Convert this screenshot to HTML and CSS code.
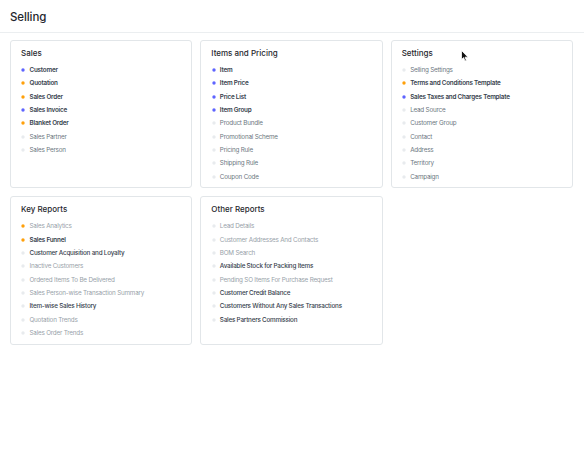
FILE: index.html
```html
<!DOCTYPE html>
<html>
<head>
<meta charset="utf-8">
<link rel="stylesheet" href="styles.css">
</head>
<body>
<header class="page-head"><h1 class="page-title">Selling</h1></header>
<main class="cards">
  <section class="card">
    <h2 class="card-title">Sales</h2>
    <ul class="links">
      <li class="link strong"><svg class="dot blue" viewBox="0 0 4 4"><circle cx="2" cy="2" r="1.7"/></svg>Customer</li>
      <li class="link strong"><svg class="dot orange" viewBox="0 0 4 4"><circle cx="2" cy="2" r="1.7"/></svg>Quotation</li>
      <li class="link strong"><svg class="dot orange" viewBox="0 0 4 4"><circle cx="2" cy="2" r="1.7"/></svg>Sales Order</li>
      <li class="link strong"><svg class="dot blue" viewBox="0 0 4 4"><circle cx="2" cy="2" r="1.7"/></svg>Sales Invoice</li>
      <li class="link strong"><svg class="dot orange" viewBox="0 0 4 4"><circle cx="2" cy="2" r="1.7"/></svg>Blanket Order</li>
      <li class="link mid"><svg class="dot" viewBox="0 0 4 4"><circle cx="2" cy="2" r="1.7"/></svg>Sales Partner</li>
      <li class="link mid"><svg class="dot" viewBox="0 0 4 4"><circle cx="2" cy="2" r="1.7"/></svg>Sales Person</li>
    </ul>
  </section>
  <section class="card">
    <h2 class="card-title">Items and Pricing</h2>
    <ul class="links">
      <li class="link strong"><svg class="dot blue" viewBox="0 0 4 4"><circle cx="2" cy="2" r="1.7"/></svg>Item</li>
      <li class="link strong"><svg class="dot blue" viewBox="0 0 4 4"><circle cx="2" cy="2" r="1.7"/></svg>Item Price</li>
      <li class="link strong"><svg class="dot blue" viewBox="0 0 4 4"><circle cx="2" cy="2" r="1.7"/></svg>Price List</li>
      <li class="link strong"><svg class="dot blue" viewBox="0 0 4 4"><circle cx="2" cy="2" r="1.7"/></svg>Item Group</li>
      <li class="link mid"><svg class="dot" viewBox="0 0 4 4"><circle cx="2" cy="2" r="1.7"/></svg>Product Bundle</li>
      <li class="link mid"><svg class="dot" viewBox="0 0 4 4"><circle cx="2" cy="2" r="1.7"/></svg>Promotional Scheme</li>
      <li class="link mid"><svg class="dot" viewBox="0 0 4 4"><circle cx="2" cy="2" r="1.7"/></svg>Pricing Rule</li>
      <li class="link mid"><svg class="dot" viewBox="0 0 4 4"><circle cx="2" cy="2" r="1.7"/></svg>Shipping Rule</li>
      <li class="link mid"><svg class="dot" viewBox="0 0 4 4"><circle cx="2" cy="2" r="1.7"/></svg>Coupon Code</li>
    </ul>
  </section>
  <section class="card settings">
    <h2 class="card-title">Settings</h2>
    <ul class="links">
      <li class="link mid"><svg class="dot" viewBox="0 0 4 4"><circle cx="2" cy="2" r="1.7"/></svg>Selling Settings</li>
      <li class="link strong"><svg class="dot orange" viewBox="0 0 4 4"><circle cx="2" cy="2" r="1.7"/></svg>Terms and Conditions Template</li>
      <li class="link strong"><svg class="dot blue" viewBox="0 0 4 4"><circle cx="2" cy="2" r="1.7"/></svg>Sales Taxes and Charges Template</li>
      <li class="link mid"><svg class="dot" viewBox="0 0 4 4"><circle cx="2" cy="2" r="1.7"/></svg>Lead Source</li>
      <li class="link mid"><svg class="dot" viewBox="0 0 4 4"><circle cx="2" cy="2" r="1.7"/></svg>Customer Group</li>
      <li class="link mid"><svg class="dot" viewBox="0 0 4 4"><circle cx="2" cy="2" r="1.7"/></svg>Contact</li>
      <li class="link mid"><svg class="dot" viewBox="0 0 4 4"><circle cx="2" cy="2" r="1.7"/></svg>Address</li>
      <li class="link mid"><svg class="dot" viewBox="0 0 4 4"><circle cx="2" cy="2" r="1.7"/></svg>Territory</li>
      <li class="link mid"><svg class="dot" viewBox="0 0 4 4"><circle cx="2" cy="2" r="1.7"/></svg>Campaign</li>
    </ul>
    <svg class="cursor" width="8" height="12" viewBox="0 0 8 12"><path d="M0.5 0.5 L0.5 9.5 L2.6 7.6 L4 11 L5.4 10.4 L4 7.2 L7 7.2 Z" fill="#111" stroke="#fff" stroke-width="0.8"/></svg>
  </section>
  <section class="card">
    <h2 class="card-title">Key Reports</h2>
    <ul class="links">
      <li class="link light"><svg class="dot orange" viewBox="0 0 4 4"><circle cx="2" cy="2" r="1.7"/></svg>Sales Analytics</li>
      <li class="link strong"><svg class="dot orange" viewBox="0 0 4 4"><circle cx="2" cy="2" r="1.7"/></svg>Sales Funnel</li>
      <li class="link dark"><svg class="dot" viewBox="0 0 4 4"><circle cx="2" cy="2" r="1.7"/></svg>Customer Acquisition and Loyalty</li>
      <li class="link light"><svg class="dot" viewBox="0 0 4 4"><circle cx="2" cy="2" r="1.7"/></svg>Inactive Customers</li>
      <li class="link light"><svg class="dot" viewBox="0 0 4 4"><circle cx="2" cy="2" r="1.7"/></svg>Ordered Items To Be Delivered</li>
      <li class="link light"><svg class="dot" viewBox="0 0 4 4"><circle cx="2" cy="2" r="1.7"/></svg>Sales Person-wise Transaction Summary</li>
      <li class="link dark"><svg class="dot" viewBox="0 0 4 4"><circle cx="2" cy="2" r="1.7"/></svg>Item-wise Sales History</li>
      <li class="link light"><svg class="dot" viewBox="0 0 4 4"><circle cx="2" cy="2" r="1.7"/></svg>Quotation Trends</li>
      <li class="link light"><svg class="dot" viewBox="0 0 4 4"><circle cx="2" cy="2" r="1.7"/></svg>Sales Order Trends</li>
    </ul>
  </section>
  <section class="card">
    <h2 class="card-title">Other Reports</h2>
    <ul class="links">
      <li class="link light"><svg class="dot" viewBox="0 0 4 4"><circle cx="2" cy="2" r="1.7"/></svg>Lead Details</li>
      <li class="link light"><svg class="dot" viewBox="0 0 4 4"><circle cx="2" cy="2" r="1.7"/></svg>Customer Addresses And Contacts</li>
      <li class="link light"><svg class="dot" viewBox="0 0 4 4"><circle cx="2" cy="2" r="1.7"/></svg>BOM Search</li>
      <li class="link dark"><svg class="dot" viewBox="0 0 4 4"><circle cx="2" cy="2" r="1.7"/></svg>Available Stock for Packing Items</li>
      <li class="link light"><svg class="dot" viewBox="0 0 4 4"><circle cx="2" cy="2" r="1.7"/></svg>Pending SO Items For Purchase Request</li>
      <li class="link dark"><svg class="dot" viewBox="0 0 4 4"><circle cx="2" cy="2" r="1.7"/></svg>Customer Credit Balance</li>
      <li class="link dark"><svg class="dot" viewBox="0 0 4 4"><circle cx="2" cy="2" r="1.7"/></svg>Customers Without Any Sales Transactions</li>
      <li class="link dark"><svg class="dot" viewBox="0 0 4 4"><circle cx="2" cy="2" r="1.7"/></svg>Sales Partners Commission</li>
    </ul>
  </section>
</main>
</body>
</html>
```
FILE: styles.css
```css
html, body {
  margin: 0;
  padding: 0;
  background: #ffffff;
  font-family: Inter, "Noto Sans", "Liberation Sans", sans-serif;
  color: #36414c;
}

.page-head {
  height: 33px;
  border-bottom: 1px solid #ebeef0;
  display: flex;
  align-items: center;
  padding-left: 10px;
  box-sizing: border-box;
}

.page-title {
  margin: 0;
  font-size: 11.5px;
  font-weight: 500;
  color: #1f272e;
  letter-spacing: -0.1px;
  line-height: 14px;
  padding-top: 1px;
}

.cards {
  display: grid;
  grid-template-columns: repeat(3, 1fr);
  gap: 8px;
  padding: 7px 11px 0 10px;
}

.card {
  position: relative;
  border: 1px solid #e2e6e9;
  border-radius: 3px;
  padding: 6px 10px 4px 10px;
}

.card-title {
  margin: 0 0 4.3px 0;
  font-size: 8px;
  line-height: 12px;
  font-weight: 500;
  color: #1f272e;
}

.links {
  list-style: none;
  margin: 0;
  padding: 0;
}

.link {
  display: flex;
  align-items: center;
  height: 13.33px;
  font-size: 6.3px;
  letter-spacing: -0.2px;
  white-space: nowrap;
}

.dot {
  flex: none;
  width: 4px;
  height: 4px;
  margin: 0 4.2px 0 0.3px;
  fill: #e8ebee;
}

.dot.blue { fill: #5e64ff; }
.dot.orange { fill: #ffa00a; }

.link.strong { font-weight: 600; color: #36414c; }
.link.dark { font-weight: 500; color: #36414c; }
.link.mid { font-weight: 400; color: #6c7680; }
.link.light { font-weight: 400; color: #98a1a9; }

.cursor {
  position: absolute;
  left: 69px;
  top: 9px;
}
```
